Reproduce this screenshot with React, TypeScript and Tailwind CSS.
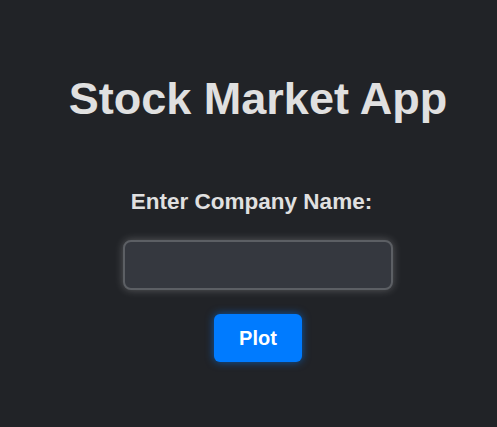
export default function App() {
  return (
    <div className="min-h-screen w-full bg-[#212327] font-['Liberation_Sans',Arial,sans-serif]">
      <div className="flex flex-col items-center pt-[73px] pl-[19px]">
        <h1 className="text-[45px] leading-[1.15] font-bold text-[#e0e0e0]">Stock Market App</h1>
        <label className="mt-[64px] mr-[13px] text-[22.5px] leading-[1.15] font-bold text-[#e0e0e0]">
          Enter Company Name:
        </label>
        <input
          type="text"
          className="mt-[25px] h-[50px] w-[270px] rounded-[8px] border-2 border-[#5c5f64] bg-[#35383f] px-3 text-[18px] text-[#e0e0e0] shadow-[0_0_8px_rgba(255,255,255,0.25)] outline-none"
        />
        <button className="mt-[24px] h-[48px] w-[88px] rounded-[6px] bg-[#007bff] text-[20px] font-bold text-white shadow-[0_0_8px_rgba(0,123,255,0.6)]">
          Plot
        </button>
      </div>
    </div>
  )
}
